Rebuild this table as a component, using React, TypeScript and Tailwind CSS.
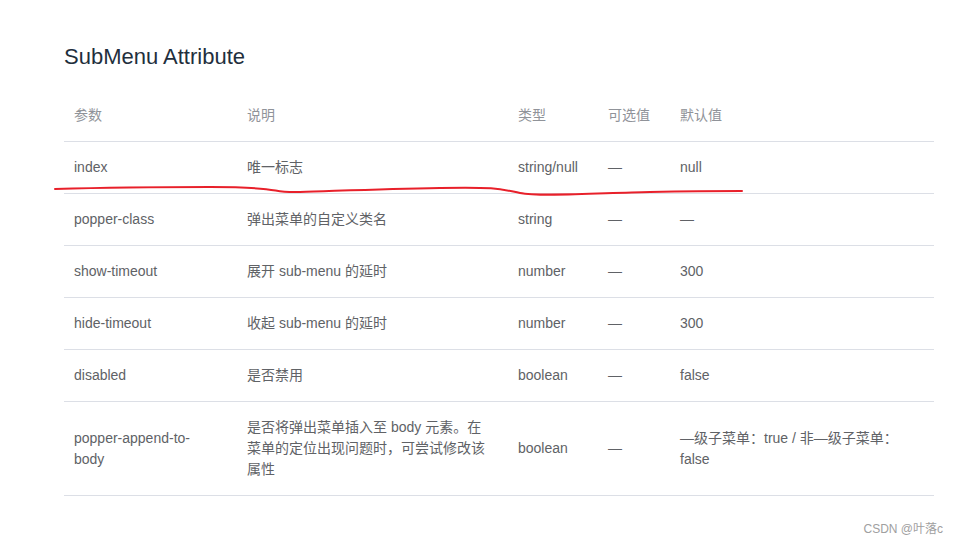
import React from "react";

const rows: { name: React.ReactNode; desc: React.ReactNode; type: string; options: string; def: React.ReactNode }[] = [
  { name: "index", desc: "唯一标志", type: "string/null", options: "—", def: "null" },
  { name: "popper-class", desc: "弹出菜单的自定义类名", type: "string", options: "—", def: "—" },
  { name: "show-timeout", desc: "展开 sub-menu 的延时", type: "number", options: "—", def: "300" },
  { name: "hide-timeout", desc: "收起 sub-menu 的延时", type: "number", options: "—", def: "300" },
  { name: "disabled", desc: "是否禁用", type: "boolean", options: "—", def: "false" },
  {
    name: (
      <>
        popper-append-to-
        <br />
        body
      </>
    ),
    desc: (
      <>
        是否将弹出菜单插入至 body 元素。在
        <br />
        菜单的定位出现问题时，可尝试修改该
        <br />
        属性
      </>
    ),
    type: "boolean",
    options: "—",
    def: (
      <>
        —级子菜单：true / 非—级子菜单：
        <br />
        false
      </>
    ),
  },
];

const cols = ["w-[173px]", "w-[271px]", "w-[90px]", "w-[72px]", "flex-1"];

export default function App() {
  return (
    <div
      className="relative w-[959px] h-[543px] bg-white overflow-hidden"
      style={{ fontFamily: '"Liberation Sans", Arial, "Noto Sans CJK SC", sans-serif' }}
    >
      <div className="pl-[64px] pr-[25px] pt-[43px]">
        <h3 className="text-[22px] leading-[28px] text-[#1f2f3d] font-normal">SubMenu Attribute</h3>

        <div className="mt-[19px] text-[14px] leading-[21px]">
          <div className="flex border-b border-[#dcdfe6] text-[#909399]">
            {["参数", "说明", "类型", "可选值", "默认值"].map((h, i) => (
              <div key={h} className={`${cols[i]} px-[10px] py-[15px]`}>
                {h}
              </div>
            ))}
          </div>
          {rows.map((r, idx) => (
            <div key={idx} className="flex items-center border-b border-[#dcdfe6] text-[#606266]">
              <div className={`${cols[0]} px-[10px] py-[15px]`}>{r.name}</div>
              <div className={`${cols[1]} px-[10px] py-[15px]`}>{r.desc}</div>
              <div className={`${cols[2]} px-[10px] py-[15px]`}>{r.type}</div>
              <div className={`${cols[3]} px-[10px] py-[15px]`}>{r.options}</div>
              <div className={`${cols[4]} px-[10px] py-[15px]`}>{r.def}</div>
            </div>
          ))}
        </div>
      </div>

      <svg className="absolute left-0 top-0 pointer-events-none" width="959" height="543">
        <path
          d="M55 189 C 90 188, 130 187, 210 187 S 265 193, 300 192 S 380 189, 440 188 S 500 189, 520 193 S 600 193, 650 192 S 710 191, 742 191"
          fill="none"
          stroke="#e8202a"
          strokeWidth="2"
          strokeLinecap="round"
        />
      </svg>

      <div className="absolute right-[16px] bottom-[6px] text-[12px] leading-[16px] text-[#a0a0a0]">CSDN @叶落c</div>
    </div>
  );
}
